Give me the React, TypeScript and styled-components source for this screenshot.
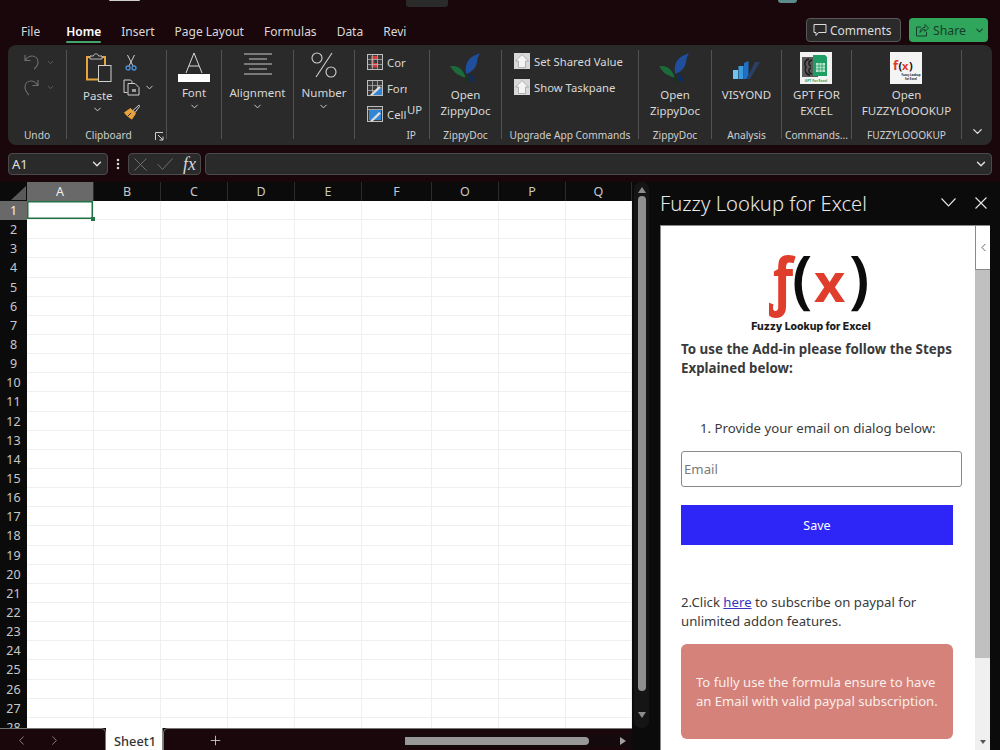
import styled, { createGlobalStyle } from "styled-components";
import { ChevronDown, ChevronLeft, ChevronRight, MoreVertical, Plus } from "lucide-react";

const GlobalStyle = createGlobalStyle`
  html, body { margin: 0; padding: 0; background: #19070b; }
  * { box-sizing: border-box; }
  body { font-family: "Noto Sans", "Open Sans", sans-serif; }
`;

const Page = styled.div`
  width: 1000px;
  height: 750px;
  overflow: hidden;
  background: #19070b;
  color: #d8d8d8;
  display: flex;
  flex-direction: column;
`;

/* sliver of the window title bar, cut off by the screenshot */
const TitleStrip = styled.div`
  height: 17px;
  display: flex;
  align-items: flex-start;
`;
const TitleMark = styled.div<{ $left: number; $w: number; $h: number; $bg: string; $round?: boolean }>`
  margin-left: ${(p) => p.$left}px;
  width: ${(p) => p.$w}px;
  height: ${(p) => p.$h}px;
  background: ${(p) => p.$bg};
  border-radius: ${(p) => (p.$round ? "0 0 10px 10px" : "0 0 3px 3px")};
`;

const TabRow = styled.div`
  height: 28px;
  display: flex;
  align-items: center;
  padding: 1px 12px 0 21px;
`;
const Tab = styled.div<{ $active?: boolean }>`
  position: relative;
  font-size: 12px;
  line-height: 18px;
  margin-right: 20px;
  white-space: nowrap;
  color: ${(p) => (p.$active ? "#fff" : "#d8d8d8")};
  font-weight: ${(p) => (p.$active ? 600 : 400)};
  &:first-child {
    margin-right: 26px;
  }
  &::after {
    content: "";
    display: ${(p) => (p.$active ? "block" : "none")};
    position: absolute;
    left: 0;
    right: 0;
    bottom: -2px;
    height: 2px;
    border-radius: 1px;
    background: #3fa56b;
  }
`;
const TabSpacer = styled.div`
  flex: 1;
`;
const CommentsButton = styled.div`
  width: 95px;
  height: 24px;
  margin-top: -3px;
  display: flex;
  align-items: center;
  gap: 3px;
  padding-left: 6px;
  font-size: 12px;
  color: #dcdcdc;
  background: #2a2a2a;
  border: 1px solid #585858;
  border-radius: 4px;
`;
const ShareButton = styled.div`
  width: 79px;
  height: 24px;
  margin: -3px 0 0 8px;
  display: flex;
  align-items: center;
  gap: 4px;
  padding-left: 7px;
  font-size: 12.3px;
  color: #17402a;
  background: #30a55c;
  border-radius: 4px;
`;

const Ribbon = styled.div`
  margin: 0 8px;
  height: 100px;
  padding: 5px 0 6px;
  display: flex;
  background: #2a2a2a;
  border-radius: 8px;
`;
const Group = styled.div<{ $w: number }>`
  position: relative;
  width: ${(p) => p.$w}px;
  flex: none;
  display: flex;
  flex-direction: column;
  border-right: 1px solid #525252;
`;
const GroupBody = styled.div<{ $justify?: string }>`
  flex: 1;
  min-height: 0;
  display: flex;
  justify-content: ${(p) => p.$justify || "center"};
`;
const GroupLabel = styled.div<{ $shift?: number; $align?: string }>`
  height: 14px;
  margin-bottom: -3px;
  padding-right: ${(p) => p.$shift || 0}px;
  font-size: 10.2px;
  line-height: 14px;
  text-align: ${(p) => p.$align || "center"};
  white-space: nowrap;
  overflow: hidden;
  color: #cfcfcf;
`;
const BigButton = styled.div<{ $left?: number }>`
  margin-left: ${(p) => p.$left || 0}px;
  padding-top: 2px;
  display: flex;
  flex-direction: column;
  align-items: center;
  font-size: 11.5px;
  line-height: 16px;
  text-align: center;
  white-space: nowrap;
  color: #d8d8d8;
`;
const IconBox = styled.div<{ $h?: number; $bottom?: number }>`
  height: ${(p) => p.$h || 35}px;
  display: flex;
  align-items: ${(p) => (p.$bottom ? "flex-end" : "flex-start")};
  padding-bottom: ${(p) => p.$bottom || 0}px;
  justify-content: center;
`;
const SmallChevron = styled(ChevronDown)`
  display: block;
  color: #d8d8d8;
`;
const StackColumn = styled.div<{ $w?: number; $gap: number; $pad: number; $left?: number }>`
  width: ${(p) => (p.$w ? `${p.$w}px` : "auto")};
  flex: none;
  margin-left: ${(p) => p.$left || 0}px;
  padding-top: ${(p) => p.$pad}px;
  display: flex;
  flex-direction: column;
  gap: ${(p) => p.$gap}px;
  overflow: hidden;
`;
const StackItem = styled.div`
  height: 16px;
  display: flex;
  align-items: center;
  gap: 4px;
  font-size: 11.3px;
  white-space: nowrap;
  color: #d8d8d8;
  svg {
    flex: none;
  }
`;
const UndoRow = styled.div`
  height: 18px;
  display: flex;
  align-items: center;
  gap: 7px;
  color: #6e6e6e;
`;
const ClippedUp = styled.div`
  align-self: flex-start;
  margin-top: 52px;
  font-size: 11.3px;
  line-height: 16px;
  color: #d8d8d8;
`;
const DialogLauncher = styled.svg`
  position: absolute;
  right: 2px;
  bottom: -2px;
`;
const CollapseChevron = styled(ChevronDown)`
  margin: 74px 0 0 8px;
  color: #e4e4e4;
`;

const FormulaBar = styled.div`
  height: 22px;
  margin: 8px 8px 0;
  display: flex;
  align-items: stretch;
`;
const NameBox = styled.div`
  width: 100px;
  display: flex;
  align-items: center;
  justify-content: space-between;
  padding: 0 3px 0 3px;
  font-size: 13px;
  color: #e0e0e0;
  background: #2a2a2a;
  border: 1px solid #4a4a4a;
  border-radius: 4px;
`;
const DotsSlot = styled.div`
  width: 20px;
  display: flex;
  align-items: center;
  justify-content: center;
  color: #d8d8d8;
`;
const FxBox = styled.div`
  width: 73px;
  display: flex;
  align-items: center;
  gap: 10px;
  padding-left: 5px;
  background: #2a2a2a;
  border: 1px solid #4a4a4a;
  border-radius: 4px;
`;
const FxText = styled.span`
  font-family: "Liberation Serif", serif;
  font-style: italic;
  font-size: 18px;
  line-height: 18px;
  color: #d8d8d8;
`;
const FormulaInput = styled.div`
  flex: 1;
  margin-left: 4px;
  display: flex;
  align-items: center;
  justify-content: flex-end;
  padding-right: 3px;
  color: #e0e0e0;
  background: #2a2a2a;
  border: 1px solid #4a4a4a;
  border-radius: 4px;
`;

const Workspace = styled.div`
  margin-top: 7px;
  height: 568px;
  display: flex;
  background: #0b0b0b;
`;
const SheetColumn = styled.div`
  width: 650px;
  display: flex;
  flex-direction: column;
`;
const SheetTop = styled.div`
  height: 546px;
  display: flex;
`;
const Grid = styled.div`
  width: 632px;
  overflow: hidden;
`;
const HeaderRow = styled.div`
  height: 19px;
  display: flex;
`;
const Corner = styled.div`
  position: relative;
  width: 27px;
  flex: none;
  &::after {
    content: "";
    position: absolute;
    right: 1px;
    bottom: 1px;
    border-style: solid;
    border-width: 0 0 14px 15px;
    border-color: transparent transparent #5a5a5a transparent;
  }
`;
const ColHeader = styled.div<{ $w: number; $active?: boolean }>`
  width: ${(p) => p.$w}px;
  flex: none;
  font-size: 12.5px;
  line-height: 19px;
  text-align: center;
  color: ${(p) => (p.$active ? "#f0f0f0" : "#c8c8c8")};
  background: ${(p) => (p.$active ? "#696969" : "#0b0b0b")};
  border-right: 1px solid #2c2c2c;
`;
const SheetRow = styled.div`
  height: 19.15px;
  display: flex;
`;
const RowHeader = styled.div<{ $active?: boolean }>`
  width: 27px;
  flex: none;
  font-size: 12.5px;
  line-height: 20px;
  text-align: center;
  color: ${(p) => (p.$active ? "#f0f0f0" : "#c8c8c8")};
  background: ${(p) => (p.$active ? "#696969" : "#0b0b0b")};
`;
const Cell = styled.div<{ $w: number; $selected?: boolean }>`
  position: relative;
  z-index: ${(p) => (p.$selected ? 1 : 0)};
  width: ${(p) => p.$w}px;
  flex: none;
  background: #fff;
  border-right: 1px solid #efefef;
  border-bottom: 1px solid #efefef;
  box-shadow: ${(p) => (p.$selected ? "inset 0 0 0 1.5px #217346" : "none")};
  &::after {
    content: "";
    display: ${(p) => (p.$selected ? "block" : "none")};
    position: absolute;
    right: -2px;
    bottom: -2px;
    width: 4px;
    height: 4px;
    background: #217346;
  }
`;
const VScroll = styled.div`
  width: 15px;
  margin-left: 2px;
  display: flex;
  flex-direction: column;
  align-items: center;
  color: #8c8c8c;
  background: #151515;
  border-radius: 7px;
`;
const VThumb = styled.div`
  width: 8px;
  height: 495px;
  margin-top: 3px;
  border-radius: 4px;
  background: #8f8f8f;
`;
const ArrowUp = styled.div`
  margin-top: 5px;
  border-style: solid;
  border-width: 0 4.5px 6px 4.5px;
  border-color: transparent transparent #8c8c8c transparent;
`;
const ArrowDown = styled.div`
  margin-top: 21px;
  border-style: solid;
  border-width: 6px 4.5px 0 4.5px;
  border-color: #8c8c8c transparent transparent transparent;
`;

const SheetBar = styled.div`
  height: 22px;
  display: flex;
  background: #0b0b0b;
`;
const TabNav = styled.div`
  width: 106px;
  display: flex;
  align-items: center;
  gap: 18px;
  padding: 2px 0 0 14px;
  color: #8a8a8a;
  background: #19070b;
  border-top: 1px solid #777;
  border-right: 1px solid #777;
  border-top-right-radius: 5px;
`;
const SheetTab = styled.div`
  width: 57px;
  padding: 4px 0 0 8px;
  font-size: 12.8px;
  font-weight: 500;
  line-height: 18px;
  color: #333;
  background: #fff;
  border-right: 1px solid #888;
`;
const SheetRest = styled.div`
  width: 469px;
  display: flex;
  align-items: center;
  padding: 2px 0 0 44px;
  color: #dcdcdc;
  background: #19070b;
  border-top: 1px solid #777;
  border-left: 1px solid #777;
  border-top-left-radius: 5px;
`;
const HScroll = styled.div`
  flex: 1;
  height: 12px;
  margin-left: 182px;
  display: flex;
  align-items: center;
  background: #140a0d;
`;
const HThumb = styled.div`
  width: 184px;
  height: 8px;
  border-radius: 0 4px 4px 0;
  background: #989898;
`;
const ArrowRight = styled.div`
  margin-left: 31px;
  border-style: solid;
  border-width: 4.5px 0 4.5px 6px;
  border-color: transparent transparent transparent #a0a0a0;
`;

const Pane = styled.div`
  width: 350px;
  display: flex;
  flex-direction: column;
  background: #0b0b0b;
`;
const PaneHeader = styled.div`
  height: 43px;
  flex: none;
  display: flex;
  align-items: center;
  padding: 0 13px 2px 10px;
  color: #e8e8e8;
`;
const PaneTitle = styled.div`
  flex: 1;
  font-size: 20.2px;
  font-weight: 300;
  white-space: nowrap;
`;
const PaneIcon = styled.svg<{ $left?: number }>`
  margin-left: ${(p) => p.$left || 0}px;
`;
const PaneBody = styled.div`
  flex: 1;
  margin: 0 10px;
  display: flex;
  min-height: 0;
  background: #fff;
  border-top: 1px solid #8a8a8a;
  border-left: 1px solid #8a8a8a;
`;
const AddinContent = styled.div`
  width: 314px;
  padding: 0 0 0 20px;
  color: #3a3a3a;
  font-size: 13.2px;
`;
const Logo = styled.div`
  height: 110px;
  padding-top: 28px;
  margin-right: 34px;
  display: flex;
  flex-direction: column;
  align-items: center;
`;
const LogoMark = styled.svg`
  display: block;
  flex: none;
  margin-left: 15px;
`;
const LogoCaption = styled.div`
  margin-top: 2px;
  font-family: Inter, sans-serif;
  font-size: 10.5px;
  line-height: 13px;
  font-weight: 800;
  color: #1c1c1c;
`;
const Heading = styled.div`
  margin-top: 4px;
  font-size: 13.35px;
  font-weight: 700;
  line-height: 19px;
`;
const StepText = styled.div`
  margin-top: 41px;
  padding-left: 19px;
  font-size: 13.2px;
  line-height: 19px;
`;
const EmailInput = styled.input`
  display: block;
  width: 281px;
  height: 36px;
  margin-top: 13px;
  padding: 0 2px;
  font: inherit;
  font-size: 13.2px;
  color: #333;
  border: 1px solid #8a8a8a;
  border-radius: 3px;
  background: #fff;
  &::placeholder {
    color: #7a7a7a;
    opacity: 1;
  }
`;
const SaveButton = styled.button`
  display: block;
  width: 272px;
  height: 40px;
  margin-top: 18px;
  padding: 0;
  font: inherit;
  font-size: 12.5px;
  color: #fff;
  background: #2d26f7;
  border: none;
`;
const SubscribeText = styled.div`
  margin-top: 48px;
  font-size: 13.2px;
  line-height: 19px;
`;
const HereLink = styled.a`
  color: #3a33c4;
  text-decoration: underline;
`;
const Notice = styled.div`
  width: 272px;
  height: 95px;
  margin-top: 13px;
  padding: 29px 5px 0 15px;
  font-size: 13.1px;
  line-height: 19px;
  white-space: nowrap;
  color: #fbeeec;
  background: #d4827a;
  border-radius: 6px;
`;
const PaneScroll = styled.div`
  width: 15px;
  flex: none;
  display: flex;
  flex-direction: column;
`;
const CollapseTab = styled.div`
  height: 44px;
  display: flex;
  align-items: center;
  justify-content: center;
  color: #444;
  background: #fff;
  border-left: 1px solid #8a8a8a;
  border-bottom: 1px solid #8a8a8a;
`;
const PaneThumb = styled.div`
  height: 388px;
  background: #c0c0c0;
`;
const PaneTrack = styled.div`
  flex: 1;
  display: flex;
  justify-content: center;
  align-items: flex-end;
  padding-bottom: 6px;
  background: #f0f0f0;
`;
const TrackArrow = styled.div`
  border-style: solid;
  border-width: 4px 3.5px 0 3.5px;
  border-color: #555 transparent transparent transparent;
`;

const ZippyIcon = () => (
  <svg width="33" height="32" viewBox="330 20 100 97">
    <path d="M424 24C395 32 375 50 382 86C396 82 412 70 415 50C416 40 420 30 424 24Z" fill="#1f4f9c" />
    <path d="M333 64C350 58 372 68 381 98C366 92 352 88 345 78Z" fill="#1c6b3a" />
    <path d="M390 86C398 88 406 95 408 108C398 113 392 108 390 100Z" fill="#0f2c5c" />
    <path d="M378 96L386 96L388 112L380 112Z" fill="#12351f" />
  </svg>
);

const UndoIcon = () => (
  <svg width="15" height="16" viewBox="0 0 15 16" fill="none" stroke="#707070" strokeWidth="1.1">
    <path d="M1 1V6.5H6.5M1 6.5C3 3.5 5 2 8 2C11.5 2 14 4.5 14 8C14 11 12 13.5 10 15" />
  </svg>
);

const RedoIcon = () => (
  <svg width="15" height="17" viewBox="0 0 15 17" fill="none" stroke="#707070" strokeWidth="1.1">
    <path d="M14 1V6.5H8.5M14 6.5C12 3.5 10 2 7 2C3.5 2 1 4.5 1 8C1 11 3 14 5 16" />
  </svg>
);

const PasteIcon = () => (
  <svg width="28" height="31" viewBox="0 0 28 31" fill="none">
    <path d="M6 5H3V27.5H14" stroke="#e8a33d" strokeWidth="2" />
    <path d="M18 5H21V13" stroke="#e8a33d" strokeWidth="2" />
    <path d="M6 7V4H9.5C10 1 14 1 14.5 4H18V7Z" stroke="#bdbdbd" strokeWidth="1" fill="#2a2a2a" />
    <rect x="14.5" y="13.5" width="12.5" height="16" stroke="#d0d0d0" strokeWidth="1" fill="#2a2a2a" />
  </svg>
);

const ScissorsIcon = () => (
  <svg width="12" height="17" viewBox="0 0 12 17" fill="none" style={{ marginLeft: 2 }}>
    <path d="M2.5 1L8 12M9.5 1L4 12" stroke="#cfcfcf" strokeWidth="1" />
    <circle cx="3" cy="14" r="2" stroke="#4a90d9" strokeWidth="1.3" />
    <circle cx="9" cy="14" r="2" stroke="#4a90d9" strokeWidth="1.3" />
  </svg>
);

const CopyIcon = () => (
  <svg width="17" height="17" viewBox="0 0 17 17" fill="none" stroke="#cfcfcf" strokeWidth="1">
    <path d="M4.5 13.5H1V1H7.5L9 2.5V4" />
    <path d="M5 4.5H12L16 8.5V16H5Z" fill="#2a2a2a" />
    <rect x="9" y="10" width="4" height="3" fill="#9a9a9a" stroke="none" />
  </svg>
);

const BrushIcon = () => (
  <svg width="17" height="16" viewBox="0 0 17 16" fill="none">
    <path d="M16 1L10 6.5L12 8.5L16.5 2.5Z" stroke="#cfcfcf" strokeWidth="1" />
    <path d="M1 8.5L7.5 4L13 9.5L9 15.5C6 14 3 11.5 1 8.5Z" fill="#e8a33d" />
    <path d="M5 12L8 9" stroke="#2a2a2a" strokeWidth="1" />
  </svg>
);

const FontIcon = () => (
  <svg width="32" height="31" viewBox="0 0 32 31" fill="none">
    <path d="M8 21L16 1L24 21M11 14H21" stroke="#d8d8d8" strokeWidth="1" />
    <rect x="0" y="22" width="32" height="8" fill="#fff" />
  </svg>
);

const AlignmentIcon = () => (
  <svg width="28" height="24" viewBox="0 0 28 24" stroke="#c8c8c8" strokeWidth="1.1">
    <path d="M0 2H28M5 7H23M0 12H28M5 17H23M0 22H28" />
  </svg>
);

const PercentIcon = () => (
  <svg width="26" height="26" viewBox="0 0 26 26" fill="none" stroke="#d0d0d0" strokeWidth="1.1">
    <circle cx="6" cy="6" r="5" />
    <circle cx="20" cy="20" r="5" />
    <path d="M21 1L5 25" />
  </svg>
);

const CondIcon = () => (
  <svg width="16" height="16" viewBox="0 0 16 16">
    <rect x="0.5" y="0.5" width="15" height="15" fill="#3a3a3a" stroke="#bdbdbd" />
    <path d="M4 2H10V5.5H7V9H11V13.5H4Z" fill="#d93a3a" />
    <path d="M0.5 5.5H15.5M0.5 10.5H15.5M5.5 0.5V15.5M10.5 0.5V15.5" stroke="#bdbdbd" strokeWidth="0.7" />
  </svg>
);

const FormatTableIcon = () => (
  <svg width="16" height="16" viewBox="0 0 16 16">
    <rect x="0.5" y="0.5" width="15" height="15" fill="#3a3a3a" stroke="#bdbdbd" />
    <path d="M0.5 5.5H15.5M0.5 10.5H15.5M5.5 0.5V15.5M10.5 0.5V15.5" stroke="#bdbdbd" strokeWidth="0.7" />
    <path d="M6 15L15 6V15Z" fill="#2f86d6" />
    <path d="M3 15L12 6L14 7.5L5.5 15.5Z" fill="#dcdcdc" />
  </svg>
);

const CellStyleIcon = () => (
  <svg width="16" height="16" viewBox="0 0 16 16">
    <rect x="0.5" y="0.5" width="15" height="15" fill="#3a3a3a" stroke="#bdbdbd" />
    <rect x="2" y="4" width="12" height="10" fill="#2f86d6" />
    <path d="M0.5 3.5H15.5" stroke="#bdbdbd" strokeWidth="0.8" />
    <path d="M3 15L12 6L14 7.5L5.5 15.5Z" fill="#dcdcdc" />
  </svg>
);

const UpgradeIcon = () => (
  <svg width="16" height="16" viewBox="0 0 16 16">
    <rect width="16" height="16" fill="#d8d8d8" />
    <path d="M8 1.5L14.5 8H11.5V14.5H4.5V8H1.5Z" fill="#f4f4f4" stroke="#9a9a9a" strokeWidth="0.7" />
  </svg>
);

const VisyondIcon = () => (
  <svg width="27" height="18" viewBox="0 0 27 18">
    <rect x="0" y="9" width="5" height="9" fill="#6cc5f2" />
    <rect x="5.5" y="5" width="5" height="13" fill="#3d9be0" />
    <path d="M11 2L15.5 0V14L13.5 18H11Z" fill="#1f6fc4" />
    <path d="M15.5 14L22 1H27L17 18H13.5Z" fill="#2c3f66" />
  </svg>
);

const GptIcon = () => (
  <svg width="32" height="32" viewBox="0 0 32 32">
    <rect width="32" height="32" fill="#f2f2f2" />
    <rect x="2" y="5" width="16" height="20" fill="#5a5a5a" />
    <path d="M9 7C4 8 4 13 6 15C4 18 6 23 10 23" fill="none" stroke="#1c1c1c" strokeWidth="1.6" />
    <path d="M12 8C8 9 8 13 11 14M12 22C8 21 8 17 11 16" fill="none" stroke="#1c1c1c" strokeWidth="1.4" />
    <path d="M13 3H25L27 5V24H13Z" fill="#1e9e62" />
    <path d="M16 11H25V20H16Z" fill="#bfe6d2" />
    <path d="M19 11V20M22 11V20M16 14H25M16 17H25" stroke="#1e9e62" strokeWidth="0.8" />
    <text x="16" y="29.5" fontSize="3.4" fontWeight="700" textAnchor="middle" fill="#1e9e62">GPT For Excel</text>
  </svg>
);

const FuzzyTile = () => (
  <svg width="32" height="32" viewBox="0 0 32 32">
    <rect width="32" height="32" fill="#f4f4f4" />
    <text x="3" y="18" fontSize="13" fontWeight="700" fill="#d93a2b">f</text>
    <text x="8.5" y="18" fontSize="11" fontWeight="700" fill="#111">(</text>
    <text x="12" y="18" fontSize="11" fontWeight="700" fill="#d93a2b">x</text>
    <text x="19" y="18" fontSize="11" fontWeight="700" fill="#111">)</text>
    <text x="21" y="24" fontSize="2.8" fontWeight="700" textAnchor="middle" fill="#222">Fuzzy Lookup</text>
    <text x="21" y="28" fontSize="2.8" fontWeight="700" textAnchor="middle" fill="#222">for Excel</text>
  </svg>
);

const LogoSvg = () => (
  <LogoMark width="100" height="64" viewBox="0 0 100 64">
    <text transform="translate(-3 48.5) scale(0.85 1)" fontSize="62" fontWeight="700" fill="#e03e2d">ƒ</text>
    <text x="23" y="47" fontSize="63" fontWeight="600" fill="#0c0c0c">(</text>
    <text x="45" y="48" fontSize="54" fontWeight="700" fill="#e03e2d">x</text>
    <text x="80" y="47" fontSize="63" fontWeight="600" fill="#0c0c0c">)</text>
  </LogoMark>
);

const COLUMNS = [
  { name: "A", w: 67 },
  { name: "B", w: 67 },
  { name: "C", w: 67 },
  { name: "D", w: 67 },
  { name: "E", w: 67 },
  { name: "F", w: 70 },
  { name: "O", w: 67 },
  { name: "P", w: 67 },
  { name: "Q", w: 66 },
];
const ROWS = Array.from({ length: 28 }, (_, i) => i + 1);

const tabs = ["File", "Home", "Insert", "Page Layout", "Formulas", "Data", "Revi"];

export default function App() {
  return (
    <Page>
      <GlobalStyle />
      <TitleStrip>
        <TitleMark $left={109} $w={31} $h={1} $bg="#cfcfcf" />
        <TitleMark $left={266} $w={42} $h={7} $bg="#2a2a2a" />
        <TitleMark $left={330} $w={19} $h={3} $bg="#5d8a8a" $round />
      </TitleStrip>
      <TabRow>
        {tabs.map((t) => (
          <Tab key={t} $active={t === "Home"}>
            {t}
          </Tab>
        ))}
        <TabSpacer />
        <CommentsButton>
          <svg width="14" height="14" viewBox="0 0 14 14" fill="none" stroke="#dcdcdc" strokeWidth="1">
            <path d="M1 1.5H13V9.5H5.5L3 12.5V9.5H1Z" />
          </svg>
          Comments
        </CommentsButton>
        <ShareButton>
          <svg width="13" height="14" viewBox="0 0 13 14" fill="none" stroke="#17402a" strokeWidth="1">
            <path d="M5 4H0.5V13H10.5V9" />
            <path d="M4 9.5C4 6 6.5 4.5 9 4.5V1.5L12.5 5L9 8.5V6.5C7 6.5 5.5 7.5 4 9.5Z" />
          </svg>
          Share
          <ChevronDown size={11} strokeWidth={2.2} style={{ marginLeft: 4 }} />
        </ShareButton>
      </TabRow>

      <Ribbon>
        <Group $w={59}>
          <GroupBody>
            <StackColumn $gap={7} $pad={3} $left={5}>
              <UndoRow>
                <UndoIcon />
                <ChevronDown size={9} />
              </UndoRow>
              <UndoRow>
                <RedoIcon />
                <ChevronDown size={9} />
              </UndoRow>
            </StackColumn>
          </GroupBody>
          <GroupLabel>Undo</GroupLabel>
        </Group>

        <Group $w={100}>
          <GroupBody $justify="flex-start">
            <BigButton $left={16}>
              <IconBox $h={36}>
                <PasteIcon />
              </IconBox>
              Paste
              <SmallChevron size={11} strokeWidth={2} />
            </BigButton>
            <StackColumn $gap={9} $pad={4} $left={10}>
              <StackItem>
                <ScissorsIcon />
              </StackItem>
              <StackItem>
                <CopyIcon />
                <ChevronDown size={11} strokeWidth={2} />
              </StackItem>
              <StackItem>
                <BrushIcon />
              </StackItem>
            </StackColumn>
          </GroupBody>
          <GroupLabel $shift={16}>Clipboard</GroupLabel>
          <DialogLauncher width="9" height="9" viewBox="0 0 9 9" fill="none" stroke="#cfcfcf" strokeWidth="1">
            <path d="M0.5 8V0.5H8M3 3L8 8M8 4.5V8H4.5" />
          </DialogLauncher>
        </Group>

        <Group $w={55}>
          <GroupBody>
            <BigButton>
              <IconBox $h={33}>
                <FontIcon />
              </IconBox>
              Font
              <SmallChevron size={11} strokeWidth={2} />
            </BigButton>
          </GroupBody>
          <GroupLabel>&nbsp;</GroupLabel>
        </Group>

        <Group $w={72}>
          <GroupBody>
            <BigButton>
              <IconBox $h={33}>
                <AlignmentIcon />
              </IconBox>
              Alignment
              <SmallChevron size={11} strokeWidth={2} />
            </BigButton>
          </GroupBody>
          <GroupLabel>&nbsp;</GroupLabel>
        </Group>

        <Group $w={61}>
          <GroupBody>
            <BigButton>
              <IconBox $h={33}>
                <PercentIcon />
              </IconBox>
              Number
              <SmallChevron size={11} strokeWidth={2} />
            </BigButton>
          </GroupBody>
          <GroupLabel>&nbsp;</GroupLabel>
        </Group>

        <Group $w={75}>
          <GroupBody $justify="flex-start">
            <StackColumn $w={40} $gap={10} $pad={4} $left={12}>
              <StackItem>
                <CondIcon />
                Cor
              </StackItem>
              <StackItem>
                <FormatTableIcon />
                Form
              </StackItem>
              <StackItem>
                <CellStyleIcon />
                Cell
              </StackItem>
            </StackColumn>
            <ClippedUp>UP</ClippedUp>
          </GroupBody>
          <GroupLabel $align="right" $shift={13}>
            IP
          </GroupLabel>
        </Group>

        <Group $w={72}>
          <GroupBody>
            <BigButton>
              <IconBox>
                <ZippyIcon />
              </IconBox>
              Open
              <br />
              ZippyDoc
            </BigButton>
          </GroupBody>
          <GroupLabel>ZippyDoc</GroupLabel>
        </Group>

        <Group $w={137}>
          <GroupBody $justify="flex-start">
            <StackColumn $gap={10} $pad={3} $left={12}>
              <StackItem>
                <UpgradeIcon />
                Set Shared Value
              </StackItem>
              <StackItem>
                <UpgradeIcon />
                Show Taskpane
              </StackItem>
            </StackColumn>
          </GroupBody>
          <GroupLabel>Upgrade App Commands</GroupLabel>
        </Group>

        <Group $w={73}>
          <GroupBody>
            <BigButton>
              <IconBox>
                <ZippyIcon />
              </IconBox>
              Open
              <br />
              ZippyDoc
            </BigButton>
          </GroupBody>
          <GroupLabel>ZippyDoc</GroupLabel>
        </Group>

        <Group $w={70}>
          <GroupBody>
            <BigButton>
              <IconBox $bottom={8}>
                <VisyondIcon />
              </IconBox>
              VISYOND
            </BigButton>
          </GroupBody>
          <GroupLabel>Analysis</GroupLabel>
        </Group>

        <Group $w={70}>
          <GroupBody>
            <BigButton>
              <IconBox>
                <GptIcon />
              </IconBox>
              GPT FOR
              <br />
              EXCEL
            </BigButton>
          </GroupBody>
          <GroupLabel>Commands...</GroupLabel>
        </Group>

        <Group $w={110}>
          <GroupBody>
            <BigButton>
              <IconBox>
                <FuzzyTile />
              </IconBox>
              Open
              <br />
              FUZZYLOOOKUP
            </BigButton>
          </GroupBody>
          <GroupLabel>FUZZYLOOOKUP</GroupLabel>
        </Group>

        <CollapseChevron size={15} strokeWidth={2} />
      </Ribbon>

      <FormulaBar>
        <NameBox>
          A1
          <ChevronDown size={14} strokeWidth={2.4} />
        </NameBox>
        <DotsSlot>
          <MoreVertical size={14} strokeWidth={2.4} />
        </DotsSlot>
        <FxBox>
          <svg width="13" height="13" viewBox="0 0 13 13" stroke="#6e6e6e" strokeWidth="1">
            <path d="M0.5 0.5L12.5 12.5M12.5 0.5L0.5 12.5" />
          </svg>
          <svg width="16" height="12" viewBox="0 0 16 12" fill="none" stroke="#6e6e6e" strokeWidth="1">
            <path d="M0.5 6L5.5 11.5L15.5 0.5" />
          </svg>
          <FxText>fx</FxText>
        </FxBox>
        <FormulaInput>
          <ChevronDown size={14} strokeWidth={2.4} />
        </FormulaInput>
      </FormulaBar>

      <Workspace>
        <SheetColumn>
          <SheetTop>
            <Grid>
              <HeaderRow>
                <Corner />
                {COLUMNS.map((c) => (
                  <ColHeader key={c.name} $w={c.w} $active={c.name === "A"}>
                    {c.name}
                  </ColHeader>
                ))}
              </HeaderRow>
              {ROWS.map((r) => (
                <SheetRow key={r}>
                  <RowHeader $active={r === 1}>{r}</RowHeader>
                  {COLUMNS.map((c) => (
                    <Cell key={c.name} $w={c.w} $selected={r === 1 && c.name === "A"} />
                  ))}
                </SheetRow>
              ))}
            </Grid>
            <VScroll>
              <ArrowUp />
              <VThumb />
              <ArrowDown />
            </VScroll>
          </SheetTop>
          <SheetBar>
            <TabNav>
              <ChevronLeft size={15} strokeWidth={1.5} />
              <ChevronRight size={15} strokeWidth={1.5} />
            </TabNav>
            <SheetTab>Sheet1</SheetTab>
            <SheetRest>
              <Plus size={15} strokeWidth={1.3} />
              <HScroll>
                <HThumb />
                <ArrowRight />
              </HScroll>
            </SheetRest>
          </SheetBar>
        </SheetColumn>

        <Pane>
          <PaneHeader>
            <PaneTitle>Fuzzy Lookup for Excel</PaneTitle>
            <PaneIcon width="15" height="9" viewBox="0 0 15 9" fill="none" stroke="#e8e8e8" strokeWidth="1.1">
              <path d="M0.5 0.5L7.5 8L14.5 0.5" />
            </PaneIcon>
            <PaneIcon $left={19} width="12" height="12" viewBox="0 0 12 12" fill="none" stroke="#e8e8e8" strokeWidth="1.1">
              <path d="M0.5 0.5L11.5 11.5M11.5 0.5L0.5 11.5" />
            </PaneIcon>
          </PaneHeader>
          <PaneBody>
            <AddinContent>
              <Logo>
                <LogoSvg />
                <LogoCaption>Fuzzy Lookup for Excel</LogoCaption>
              </Logo>
              <Heading>
                To use the Add-in please follow the Steps
                <br />
                Explained below:
              </Heading>
              <StepText>1. Provide your email on dialog below:</StepText>
              <EmailInput placeholder="Email" readOnly />
              <SaveButton>Save</SaveButton>
              <SubscribeText>
                2.Click <HereLink>here</HereLink> to subscribe on paypal for
                <br />
                unlimited addon features.
              </SubscribeText>
              <Notice>
                To fully use the formula ensure to have
                <br />
                an Email with valid paypal subscription.
              </Notice>
            </AddinContent>
            <PaneScroll>
              <CollapseTab>
                <ChevronLeft size={13} strokeWidth={1.5} />
              </CollapseTab>
              <PaneThumb />
              <PaneTrack>
                <TrackArrow />
              </PaneTrack>
            </PaneScroll>
          </PaneBody>
        </Pane>
      </Workspace>
    </Page>
  );
}
